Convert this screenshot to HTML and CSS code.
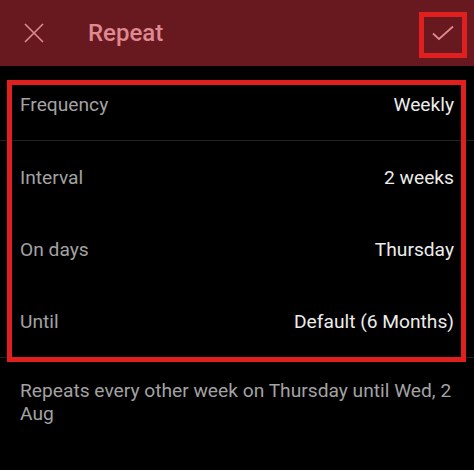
FILE: index.html
```html
<!DOCTYPE html>
<html lang="en">

<head>
    <link rel="stylesheet" href="styles.css">
</head>

<body>
    <header class="toolbar">
        <button class="icon-btn close" aria-label="Close">
            <svg width="20" height="20" viewBox="0 0 20 20">
                <path d="M1 1 L19 19 M19 1 L1 19" stroke="currentColor" stroke-width="1.6" fill="none"/>
            </svg>
        </button>
        <h1 class="title">Repeat</h1>
        <button class="icon-btn save" aria-label="Save">
            <svg width="22" height="16" viewBox="0 0 22 16">
                <path d="M1 8.5 L7 14 L21 1.5" stroke="currentColor" stroke-width="1.7" fill="none"/>
            </svg>
        </button>
    </header>

    <main class="settings">
        <div class="group">
            <div class="row">
                <span class="label">Frequency</span>
                <span class="value">Weekly</span>
            </div>
        </div>
        <div class="group">
            <div class="row">
                <span class="label">Interval</span>
                <span class="value">2 weeks</span>
            </div>
            <div class="row">
                <span class="label">On days</span>
                <span class="value">Thursday</span>
            </div>
            <div class="row">
                <span class="label">Until</span>
                <span class="value">Default (6 Months)</span>
            </div>
        </div>
        <p class="summary">Repeats every other week on Thursday until Wed, 2 Aug</p>
    </main>

    <div class="highlight highlight-save"></div>
    <div class="highlight highlight-list"></div>
</body>
</html>
```

FILE: styles.css
```css
body {
    margin: 0;
    background: #000;
    font-family: Roboto, "Noto Sans", sans-serif;
    height: 470px;
    overflow: hidden;
}

.toolbar {
    display: flex;
    align-items: center;
    height: 66px;
    background: #681920;
    color: #df8a90;
}

.icon-btn {
    background: none;
    border: 0;
    padding: 0;
    color: inherit;
    display: flex;
}

.close {
    margin-left: 24px;
}

.title {
    margin: 0 0 0 44px;
    font-size: 24px;
    font-weight: 500;
    flex: 1;
}

.save {
    margin-right: 20px;
}

.settings {
    padding-top: 2px;
}

.group {
    border-bottom: 1px solid #222;
}

.row {
    display: flex;
    justify-content: space-between;
    align-items: center;
    height: 72px;
    padding: 0 20px;
    font-size: 19.2px;
}

.label {
    color: #a3a3a3;
}

.value {
    color: #ececec;
}

.summary {
    margin: 0;
    padding: 21px 20px 0;
    font-size: 19.2px;
    line-height: 23px;
    color: #a3a3a3;
}

.highlight {
    position: absolute;
    border: 5px solid #e0201f;
    box-sizing: border-box;
}

.highlight-save {
    left: 419px;
    top: 12px;
    width: 48px;
    height: 46px;
}

.highlight-list {
    left: 7px;
    top: 80px;
    width: 459px;
    height: 282px;
}
```
